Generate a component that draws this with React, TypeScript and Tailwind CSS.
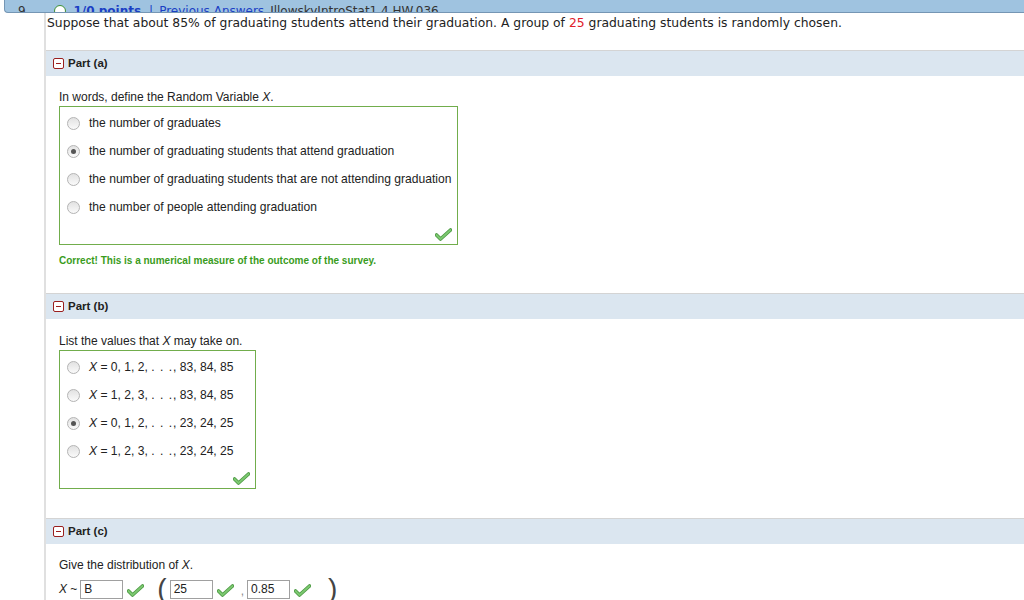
import React from "react";

function Check() {
  return (
    <svg width="17" height="13" viewBox="0 0 17 13" className="block">
      <path d="M1.5 7 L5.5 11 L15.5 2" fill="none" stroke="#4e9a45" strokeWidth="3.6" strokeLinecap="round" strokeLinejoin="round" />
      <path d="M1.5 7 L5.5 11 L15.5 2" fill="none" stroke="#7cc870" strokeWidth="1.8" strokeLinecap="round" strokeLinejoin="round" />
    </svg>
  );
}

function Radio({ checked }: { checked?: boolean }) {
  return (
    <span className="flex h-[13px] w-[13px] items-center justify-center rounded-full border border-[#b4b4b4] bg-gradient-to-b from-[#e2e2e2] to-[#fafafa]">
      {checked && <span className="h-[5px] w-[5px] rounded-full bg-[#555]" />}
    </span>
  );
}

function PartHeader({ label }: { label: string }) {
  return (
    <div className="flex h-[26px] items-center border-t border-[#d4d4d4] bg-[#dbe6f0] pl-[7px]">
      <span className="flex h-[11px] w-[11px] items-center justify-center rounded-[2px] border border-[#9a1f1f] bg-white">
        <span className="h-[1.5px] w-[5px] bg-[#9a1f1f]" />
      </span>
      <span className="ml-[4px] text-[11.5px] font-bold text-[#222]">{label}</span>
    </div>
  );
}

function Options({ items, selected, width }: { items: React.ReactNode[]; selected: number; width: string }) {
  return (
    <div className={`relative ml-[11px] mt-[2px] h-[139px] border border-[#71ad4c] ${width}`}>
      <div className="flex flex-col pt-[2px]">
        {items.map((it, i) => (
          <div key={i} className="flex h-[28px] items-center">
            <span className="ml-[7px]"><Radio checked={i === selected} /></span>
            <span className="ml-[9px] text-[12.1px] text-[#222]">{it}</span>
          </div>
        ))}
      </div>
      <div className="absolute bottom-[3px] right-[5px]">
        <Check />
      </div>
    </div>
  );
}

function Field({ value }: { value: string }) {
  return (
    <span className="flex h-[19px] w-[43px] items-center border border-[#a0a0a0] pl-[3px] text-[12px] text-[#222]">{value}</span>
  );
}

export default function App() {
  const X = <i>X</i>;
  const dots = <span className="tracking-[1px]">. . .</span>;
  return (
    <div className="h-[600px] w-[1024px] overflow-hidden bg-white font-['Liberation_Sans',Arial,sans-serif]">
      <div className="ml-[4px] flex h-[13px] items-end overflow-hidden rounded-bl-[4px] border-b border-l border-[#7596b4] bg-[#9fc3e0]">
        <div className="mb-[-8px] flex items-center pl-[13px] text-[12px] font-['DejaVu_Sans',sans-serif]">
          <span className="text-[#333]">9.</span>
          <span className="ml-[25px] h-[12px] w-[12px] rounded-full border border-[#3f8f36] bg-white" />
          <span className="ml-[7px] font-bold text-[#1b3fc4]">1/0 points</span>
          <span className="ml-[8px] text-[#1b3fc4]">|</span>
          <span className="ml-[6px] text-[#1b3fc4]">Previous Answers</span>
          <span className="ml-[6px] text-[#333]">IllowskyIntroStat1 4.HW.036.</span>
        </div>
      </div>
      <div className="ml-[44px] h-[600px] border-l-2 border-[#e0e0e0]">
        <p className="pl-[1px] pt-[2px] font-['DejaVu_Sans',sans-serif] text-[12.35px] leading-[17px] text-[#222]">
          Suppose that about 85% of graduating students attend their graduation. A group of <span className="text-[#e0202a]">25</span> graduating students is randomly chosen.
        </p>
        <div className="mt-[18px]">
          <PartHeader label="Part (a)" />
          <div className="pl-[2px]">
            <p className="ml-[11px] mt-[14px] text-[12px] leading-[14px] text-[#222]">In words, define the Random Variable {X}.</p>
            <Options
              width="w-[399px]"
              selected={1}
              items={[
                "the number of graduates",
                "the number of graduating students that attend graduation",
                "the number of graduating students that are not attending graduation",
                "the number of people attending graduation",
              ]}
            />
            <p className="ml-[11px] mt-[9px] text-[10px] font-bold leading-[14px] text-[#3a9c1c]">
              Correct! This is a numerical measure of the outcome of the survey.
            </p>
          </div>
        </div>
        <div className="mt-[25px]">
          <PartHeader label="Part (b)" />
          <div className="pl-[2px]">
            <p className="ml-[11px] mt-[15px] text-[12px] leading-[14px] text-[#222]">List the values that {X} may take on.</p>
            <Options
              width="w-[197px]"
              selected={2}
              items={[
                <>{X} = 0, 1, 2, {dots}, 83, 84, 85</>,
                <>{X} = 1, 2, 3, {dots}, 83, 84, 85</>,
                <>{X} = 0, 1, 2, {dots}, 23, 24, 25</>,
                <>{X} = 1, 2, 3, {dots}, 23, 24, 25</>,
              ]}
            />
          </div>
        </div>
        <div className="mt-[29px]">
          <PartHeader label="Part (c)" />
          <div className="pl-[2px]">
            <p className="ml-[11px] mt-[14px] text-[12px] leading-[14px] text-[#222]">Give the distribution of {X}.</p>
            <div className="ml-[11px] mt-[4px] flex items-center text-[12px] text-[#222]">
              <span>{X} ~</span>
              <span className="ml-[3px]"><Field value="B" /></span>
              <span className="ml-[4px] mt-[3px]"><Check /></span>
              <span className="ml-[13px] text-[28px] font-light leading-[26px] text-[#444]">(</span>
              <span className="ml-[3px]"><Field value="25" /></span>
              <span className="ml-[4px] mt-[3px]"><Check /></span>
              <span className="ml-[7px] mt-[4px] text-[#888]">,</span>
              <span className="ml-[3px]"><Field value="0.85" /></span>
              <span className="ml-[4px] mt-[3px]"><Check /></span>
              <span className="ml-[17px] text-[28px] font-light leading-[26px] text-[#444]">)</span>
            </div>
          </div>
        </div>
      </div>
    </div>
  );
}
